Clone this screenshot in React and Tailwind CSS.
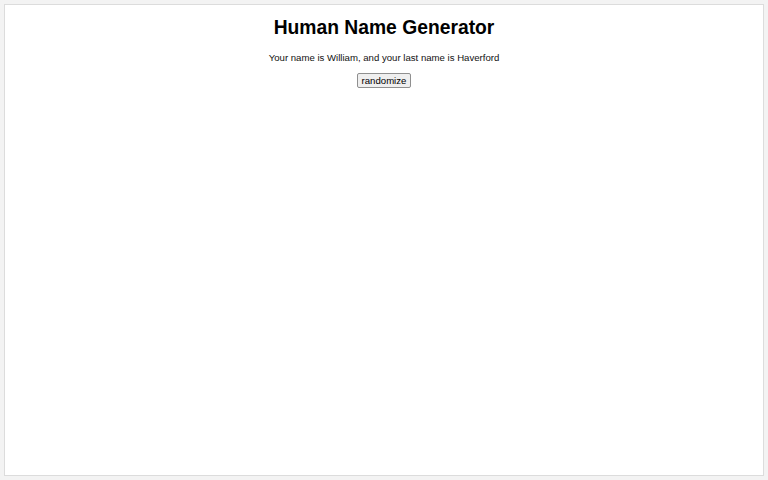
import React, { useState } from 'react'

const FIRST = ['William', 'Eleanor', 'Thomas', 'Margaret', 'Henry', 'Clara']
const LAST = ['Haverford', 'Whitmore', 'Ashby', 'Caldwell', 'Pemberton', 'Linley']

export default function App() {
  const [first, setFirst] = useState('William')
  const [last, setLast] = useState('Haverford')

  function randomize() {
    setFirst(FIRST[Math.floor(Math.random() * FIRST.length)])
    setLast(LAST[Math.floor(Math.random() * LAST.length)])
  }

  return (
    <div className="h-[480px] bg-[#f3f3f3] p-[4px] font-['Liberation_Sans',Arial,sans-serif]">
      <div className="h-[472px] bg-white border border-[#dcdcdc] flex flex-col items-center">
        <h1 className="mt-[11px] text-[19.3px] leading-[24px] font-bold text-black">Human Name Generator</h1>
        <p className="mt-[12px] text-[9.6px] leading-[12px] text-[#111]">
          Your name is {first}, and your last name is {last}
        </p>
        <button
          onClick={randomize}
          className="mt-[9px] h-[15px] px-[4px] text-[9.6px] leading-[12px] text-black bg-[#efefef] border border-[#8f8f8f] rounded-[2px]"
        >
          randomize
        </button>
      </div>
    </div>
  )
}
